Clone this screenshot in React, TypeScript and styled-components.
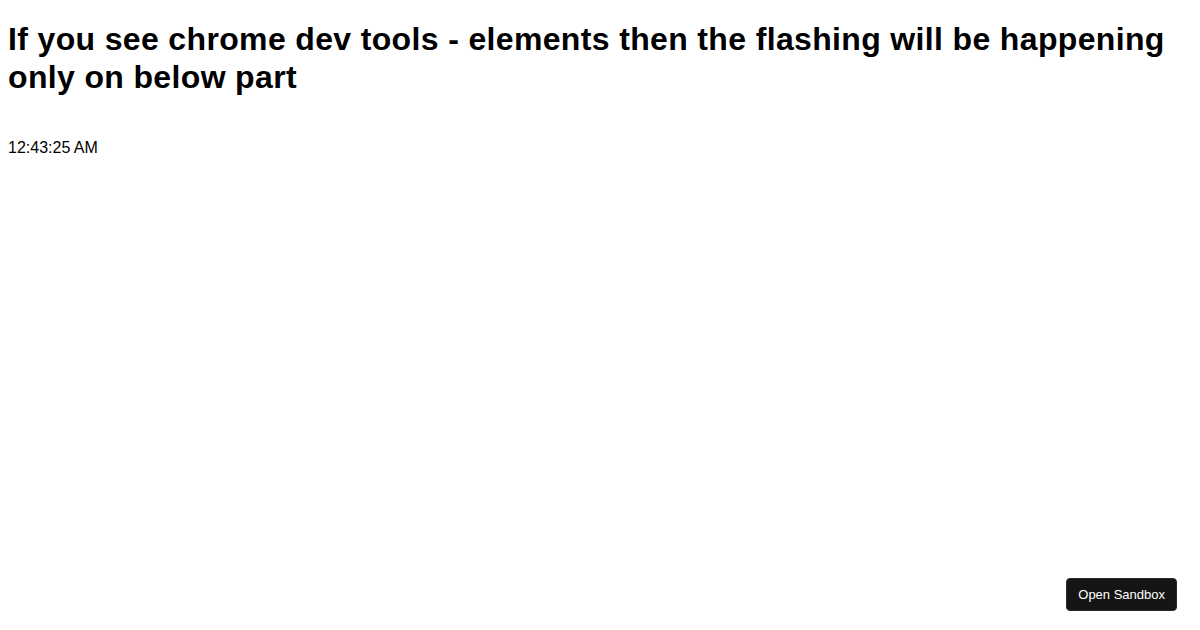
import React, { useState } from 'react'
import styled, { createGlobalStyle } from 'styled-components'

const GlobalStyle = createGlobalStyle`
  body {
    margin: 8px;
    background: #fff;
    color: #000;
    font-family: 'Liberation Sans', Arial, Helvetica, sans-serif;
  }
`

const Title = styled.h1`
  font-size: 32px;
  font-weight: bold;
  letter-spacing: 0.35px;
  line-height: 38px;
  margin: 12px 0 0;
`

const Clock = styled.div`
  font-size: 16px;
  margin-top: 43px;
`

const SandboxButton = styled.a`
  position: fixed;
  right: 23px;
  bottom: 19px;
  display: flex;
  align-items: center;
  justify-content: center;
  height: 33px;
  padding: 0 11px;
  border-radius: 4px;
  background: #151515;
  border: 1px solid #2a2a2a;
  box-sizing: border-box;
  color: #fff;
  font: 400 13px 'Liberation Sans', Arial, sans-serif;
  text-decoration: none;
`

export default function App() {
  const [time] = useState('12:43:25 AM')

  return (
    <>
      <GlobalStyle />
      <Title>
        If you see chrome dev tools - elements then the flashing will be
        happening only on below part
      </Title>
      <Clock>{time}</Clock>
      <SandboxButton href='#'>Open Sandbox</SandboxButton>
    </>
  )
}
